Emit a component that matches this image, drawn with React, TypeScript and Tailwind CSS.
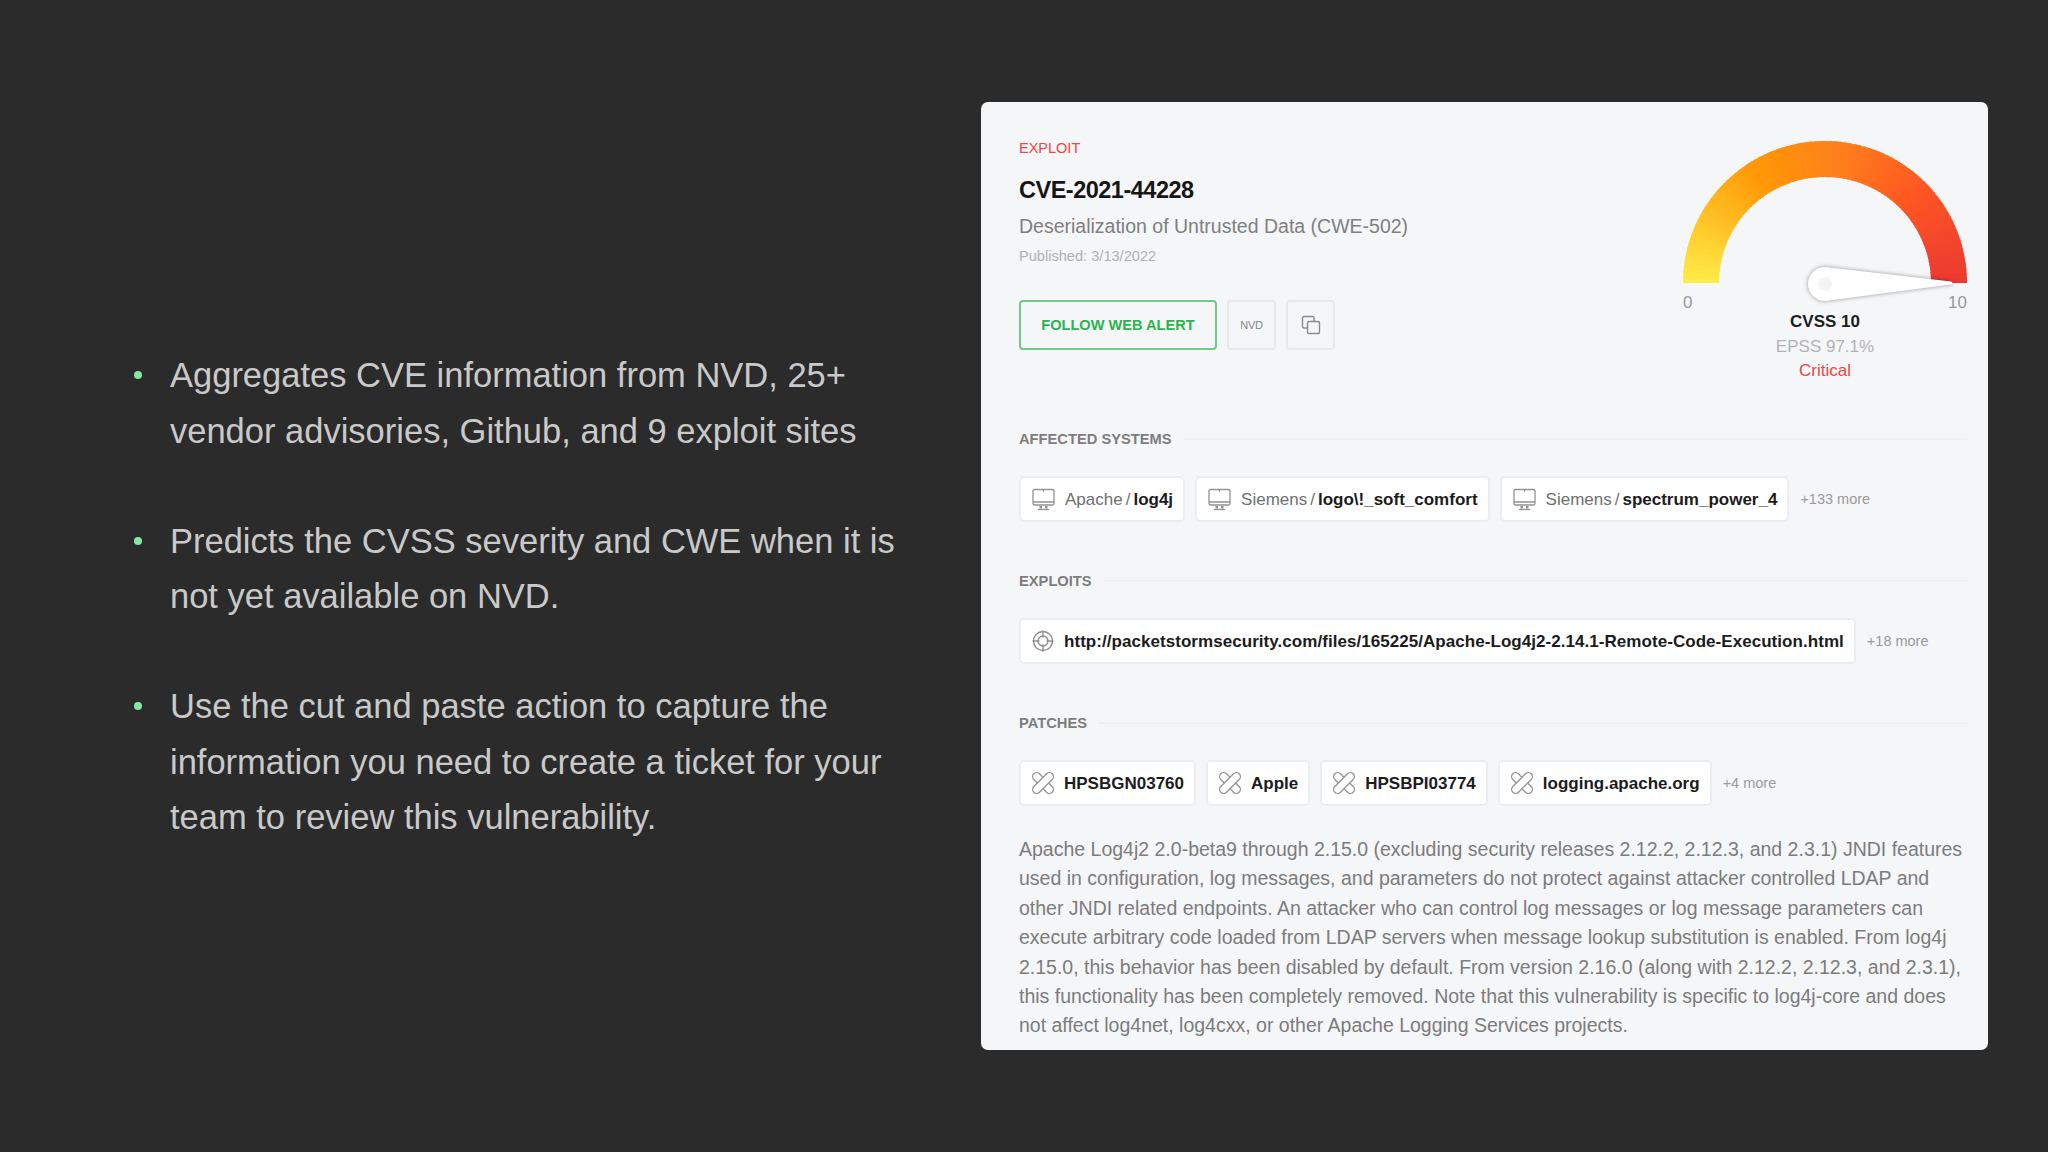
const FONT = "font-['Liberation_Sans',Arial,sans-serif]";

const BULLETS = [
  ["Aggregates CVE information from NVD, 25+", "vendor advisories, Github, and 9 exploit sites"],
  ["Predicts the CVSS severity and CWE when it is", "not yet available on NVD."],
  [
    "Use the cut and paste action to capture the",
    "information you need to create a ticket for your",
    "team to review this vulnerability.",
  ],
];

const DESCRIPTION = [
  "Apache Log4j2 2.0-beta9 through 2.15.0 (excluding security releases 2.12.2, 2.12.3, and 2.3.1) JNDI features",
  "used in configuration, log messages, and parameters do not protect against attacker controlled LDAP and",
  "other JNDI related endpoints. An attacker who can control log messages or log message parameters can",
  "execute arbitrary code loaded from LDAP servers when message lookup substitution is enabled. From log4j",
  "2.15.0, this behavior has been disabled by default. From version 2.16.0 (along with 2.12.2, 2.12.3, and 2.3.1),",
  "this functionality has been completely removed. Note that this vulnerability is specific to log4j-core and does",
  "not affect log4net, log4cxx, or other Apache Logging Services projects.",
];

// gauge colour stops, left end to right end of the arc
const STOPS: [number, number[]][] = [
  [0, [255, 235, 70]],
  [0.32, [255, 152, 5]],
  [0.55, [255, 125, 28]],
  [0.75, [255, 87, 34]],
  [1, [236, 58, 50]],
];

function colorAt(t: number) {
  for (let i = 1; i < STOPS.length; i++) {
    if (t <= STOPS[i][0]) {
      const [t0, c0] = STOPS[i - 1];
      const [t1, c1] = STOPS[i];
      const k = (t - t0) / (t1 - t0);
      return `rgb(${c0.map((v, j) => Math.round(v + (c1[j] - v) * k)).join(",")})`;
    }
  }
  return "rgb(236,58,50)";
}

function Gauge() {
  const n = 90;
  const segs = Array.from({ length: n }, (_, i) => {
    const a0 = Math.PI - (Math.PI * i) / n;
    const a1 = Math.max(0, Math.PI - (Math.PI * (i + 1.4)) / n);
    const x0 = 142 + 124 * Math.cos(a0);
    const y0 = 141 - 124 * Math.sin(a0);
    const x1 = 142 + 124 * Math.cos(a1);
    const y1 = 141 - 124 * Math.sin(a1);
    return (
      <path
        key={i}
        d={`M${x0} ${y0} A124 124 0 0 1 ${x1} ${y1}`}
        stroke={colorAt(i / (n - 1))}
        strokeWidth="36"
        fill="none"
      />
    );
  });
  return (
    <svg width="284" height="152" viewBox="0 0 284 152" className="block overflow-visible">
      {segs}
      <path
        d="M142 125 L268 139.6 Q271 141 268 142.4 L142 159 A17 17 0 0 1 142 125 Z"
        fill="#fff"
        className="drop-shadow-[0_0_2px_rgba(0,0,0,0.4)]"
      />
      <circle cx="142" cy="142" r="7" fill="#f3f4f6" />
    </svg>
  );
}

function MonitorIcon() {
  return (
    <svg width="23" height="23" viewBox="0 0 23 23" fill="none" stroke="#929292" strokeWidth="1.3" className="shrink-0">
      <rect x="1" y="1.500" width="21" height="15.500" rx="1.500" />
      <path d="M1 14h21M11.500 1.500v2" />
      <path d="M6 21.500h11" />
      <rect x="7.500" y="18" width="2.500" height="2.500" fill="#929292" stroke="none" />
      <rect x="13" y="18" width="2.500" height="2.500" fill="#929292" stroke="none" />
    </svg>
  );
}

function TargetIcon() {
  return (
    <svg width="22" height="22" viewBox="0 0 22 22" fill="none" stroke="#8f8f8f" strokeWidth="1.4" className="shrink-0">
      <circle cx="11" cy="11" r="9.500" />
      <circle cx="11" cy="11" r="5" />
      <path d="M11 0.500v7M11 14.500v7M0.500 11h7M14.500 11h7" />
    </svg>
  );
}

function PatchIcon() {
  return (
    <svg width="22" height="22" viewBox="0 0 22 22" fill="none" stroke="#929292" strokeWidth="1.3" className="shrink-0">
      <rect x="-2" y="7" width="26" height="8" rx="4" transform="rotate(-45 11 11)" />
      <path
        d="M7 7H2a4 4 0 0 0 0 8H7M15 7H20a4 4 0 0 1 0 8H15"
        transform="rotate(45 11 11)"
      />
    </svg>
  );
}

function CopyIcon() {
  return (
    <svg width="20" height="20" viewBox="0 0 20 20" fill="none" stroke="#8a8a8a" strokeWidth="1.4">
      <path d="M6.500 13H3a1.500 1.500 0 0 1-1.500-1.500V3A1.500 1.500 0 0 1 3 1.500h8.500A1.500 1.500 0 0 1 13 3v3.500" />
      <rect x="6.500" y="6.500" width="12" height="12" rx="1.500" />
    </svg>
  );
}

function Chip({
  icon,
  vendor,
  name,
  wide,
}: {
  icon: React.ReactNode;
  vendor?: string;
  name: string;
  wide?: boolean;
}) {
  return (
    <div className="flex h-[46px] items-center gap-[10px] rounded-[5px] border-2 border-[#ecedef] bg-white pl-[11px] pr-[10px] text-[17px] leading-none whitespace-nowrap">
      {icon}
      <span className={wide ? "tracking-[0.05px]" : ""}>
        {vendor && (
          <span className="text-[#6f6f6f]">
            {vendor}
            <span className="mx-[3px]">/</span>
          </span>
        )}
        <span className="font-bold text-[#1c1c1c]">{name}</span>
      </span>
    </div>
  );
}

function Section({ title, mt, children }: { title: string; mt: string; children: React.ReactNode }) {
  return (
    <div className={mt}>
      <div className="flex h-5 items-center gap-[11px]">
        <span className="text-[14.700px] font-bold text-[#7d7d7d]">{title}</span>
        <div className="h-[2px] flex-1 bg-[#eef0f2]" />
      </div>
      <div className="mt-[27px] flex items-center gap-[10px]">{children}</div>
    </div>
  );
}

function More({ children }: { children: React.ReactNode }) {
  return <span className="ml-[1px] pt-[2px] text-[14.500px] text-[#9a9a9a]">{children}</span>;
}

export default function App() {
  return (
    <div className={`${FONT} flex h-[1152px] w-[2048px] overflow-hidden bg-[#2b2b2b]`}>
      {/* Left bullets */}
      <div className="w-[981px] shrink-0 pl-[134px] pt-[348px]">
        <ul className="flex flex-col gap-[54.500px]">
          {BULLETS.map((lines) => (
            <li key={lines[0]} className="flex gap-[28px]">
              <span className="mt-[23px] h-2 w-2 shrink-0 rounded-full bg-[#86e5a0]" />
              <div className="text-[34.500px] leading-[55.500px] text-[#c9c9c9] whitespace-nowrap">
                {lines.map((l) => (
                  <div key={l}>{l}</div>
                ))}
              </div>
            </li>
          ))}
        </ul>
      </div>

      {/* Card */}
      <div className="mt-[102px] h-[948px] w-[1007px] shrink-0 overflow-hidden rounded-[7px] bg-[#f5f6f8] pl-[38px] pr-[21px] pt-[36px]">
        <div className="flex h-[242px] items-start justify-between">
          <div>
            <div className="text-[14.500px] leading-5 text-[#ef4444]">EXPLOIT</div>
            <div className="mt-4 text-[23.500px] font-bold leading-8 tracking-[-0.5px] text-[#161616]">CVE-2021-44228</div>
            <div className="mt-[7px] text-[19.500px] leading-[26px] text-[#7f7f7f]">
              Deserialization of Untrusted Data (CWE-502)
            </div>
            <div className="mt-[7px] text-[14.600px] leading-5 text-[#b0b0b0]">Published: 3/13/2022</div>
            <div className="mt-[34px] flex gap-[10px]">
              <div className="flex h-[50px] w-[198px] items-center justify-center rounded-[4px] border-2 border-[#6fcb86] pt-[2px] text-[14.600px] font-bold text-[#2cb34f]">
                FOLLOW WEB ALERT
              </div>
              <div className="flex h-[50px] w-[49px] items-center justify-center rounded-[4px] border-2 border-[#e8e9eb] text-[11px] tracking-[-0.3px] text-[#858585]">
                NVD
              </div>
              <div className="flex h-[50px] w-[49px] items-center justify-center rounded-[4px] border-2 border-[#e8e9eb]">
                <CopyIcon />
              </div>
            </div>
          </div>
          <div className="mt-1 w-[284px]">
            <Gauge />
            <div className="flex h-[18px] items-center justify-between text-[17px] text-[#999]">
              <span>0</span>
              <span>10</span>
            </div>
            <div className="text-center text-[17px] font-bold leading-5 text-[#1c1c1c]">CVSS 10</div>
            <div className="mt-[5px] text-center text-[17px] leading-5 text-[#b3b3b3]">EPSS 97.1%</div>
            <div className="mt-1 text-center text-[17px] leading-5 text-[#ef4444]">Critical</div>
          </div>
        </div>

        <Section title="AFFECTED SYSTEMS" mt="mt-[49px]">
          <Chip icon={<MonitorIcon />} vendor="Apache" name="log4j" />
          <Chip icon={<MonitorIcon />} vendor="Siemens" name="logo\!_soft_comfort" />
          <Chip icon={<MonitorIcon />} vendor="Siemens" name="spectrum_power_4" />
          <More>+133 more</More>
        </Section>

        <Section title="EXPLOITS" mt="mt-[49px]">
          <Chip
            icon={<TargetIcon />}
            name="http://packetstormsecurity.com/files/165225/Apache-Log4j2-2.14.1-Remote-Code-Execution.html"
            wide
          />
          <More>+18 more</More>
        </Section>

        <Section title="PATCHES" mt="mt-[49px]">
          <Chip icon={<PatchIcon />} name="HPSBGN03760" />
          <Chip icon={<PatchIcon />} name="Apple" />
          <Chip icon={<PatchIcon />} name="HPSBPI03774" />
          <Chip icon={<PatchIcon />} name="logging.apache.org" />
          <More>+4 more</More>
        </Section>

        <div className="mt-[29px] text-[19.500px] leading-[29.400px] text-[#7c7c7c] whitespace-nowrap">
          {DESCRIPTION.map((l) => (
            <div key={l}>{l}</div>
          ))}
        </div>
      </div>
    </div>
  );
}
